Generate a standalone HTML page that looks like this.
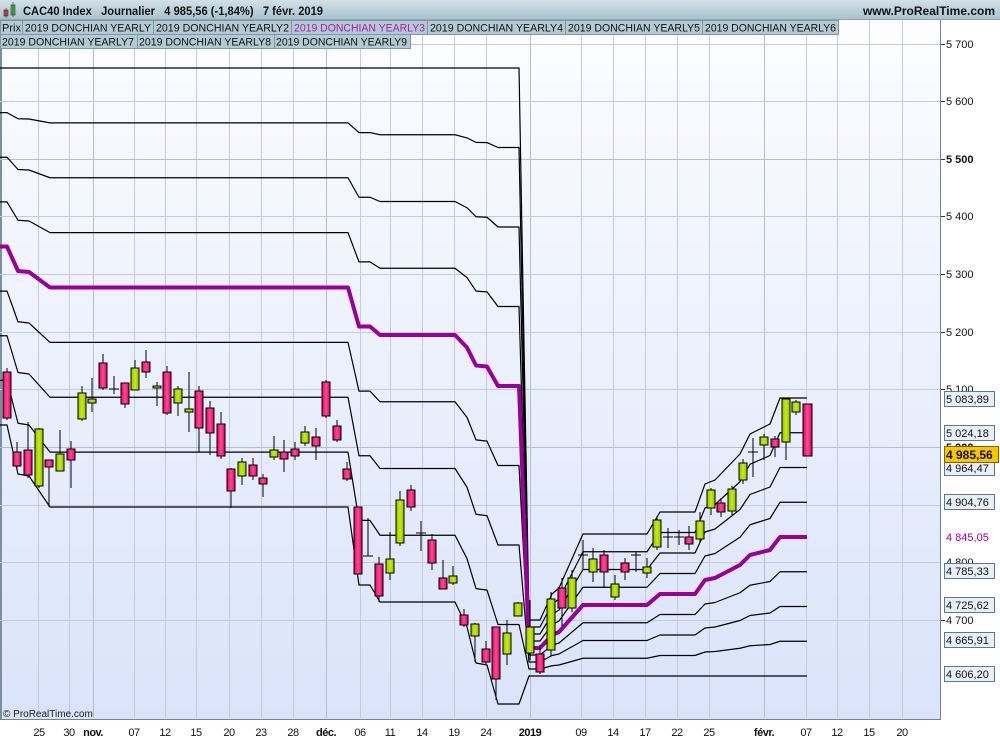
<!DOCTYPE html>
<html><head><meta charset="utf-8"><style>
body{margin:0;width:1000px;height:740px;overflow:hidden;background:#fff;font-family:"Liberation Sans",sans-serif}
svg{position:absolute;left:0;top:0}
</style></head><body>
<svg width="1000" height="740" viewBox="0 0 1000 740" xmlns="http://www.w3.org/2000/svg" font-family="Liberation Sans, sans-serif">
<defs>
<linearGradient id="bg" x1="0" y1="0" x2="0" y2="1"><stop offset="0" stop-color="#fdfdff"/><stop offset="1" stop-color="#d9e3fa"/></linearGradient>
<linearGradient id="hd" x1="0" y1="0" x2="0" y2="1"><stop offset="0" stop-color="#d2e1e8"/><stop offset="1" stop-color="#a9c1cd"/></linearGradient>
<linearGradient id="gr" x1="0" y1="0" x2="1" y2="0"><stop offset="0" stop-color="#8fc000"/><stop offset=".5" stop-color="#c6ec10"/><stop offset="1" stop-color="#8fc000"/></linearGradient>
<linearGradient id="pk" x1="0" y1="0" x2="1" y2="0"><stop offset="0" stop-color="#e0005c"/><stop offset=".5" stop-color="#ff4c9a"/><stop offset="1" stop-color="#e0005c"/></linearGradient>
</defs>
<rect x="0" y="20" width="940" height="699" fill="url(#bg)"/>
<rect x="0" y="20" width="2" height="699" fill="#7890a0"/>
<g stroke="#c4cbdc" stroke-width="1">
<line x1="38.5" y1="20" x2="38.5" y2="718"/><line x1="69.5" y1="20" x2="69.5" y2="718"/><line x1="93.5" y1="20" x2="93.5" y2="718" stroke="#b6bdd0"/><line x1="134.5" y1="20" x2="134.5" y2="718"/><line x1="165.5" y1="20" x2="165.5" y2="718"/><line x1="196.5" y1="20" x2="196.5" y2="718"/><line x1="229.5" y1="20" x2="229.5" y2="718"/><line x1="261.5" y1="20" x2="261.5" y2="718"/><line x1="293.5" y1="20" x2="293.5" y2="718"/><line x1="326.5" y1="20" x2="326.5" y2="718" stroke="#b6bdd0"/><line x1="360.5" y1="20" x2="360.5" y2="718"/><line x1="390.5" y1="20" x2="390.5" y2="718"/><line x1="422.5" y1="20" x2="422.5" y2="718"/><line x1="454.5" y1="20" x2="454.5" y2="718"/><line x1="486.5" y1="20" x2="486.5" y2="718"/><line x1="530.5" y1="20" x2="530.5" y2="718" stroke="#b6bdd0"/><line x1="581.5" y1="20" x2="581.5" y2="718"/><line x1="613.5" y1="20" x2="613.5" y2="718"/><line x1="645.5" y1="20" x2="645.5" y2="718"/><line x1="677.5" y1="20" x2="677.5" y2="718"/><line x1="709.5" y1="20" x2="709.5" y2="718"/><line x1="764.5" y1="20" x2="764.5" y2="718" stroke="#b6bdd0"/><line x1="806.5" y1="20" x2="806.5" y2="718"/><line x1="837.5" y1="20" x2="837.5" y2="718"/><line x1="869.5" y1="20" x2="869.5" y2="718"/><line x1="902.5" y1="20" x2="902.5" y2="718"/>
<line x1="0" y1="44.5" x2="940" y2="44.5"/><line x1="0" y1="101.5" x2="940" y2="101.5"/><line x1="0" y1="159.5" x2="940" y2="159.5" stroke="#b6bdd0"/><line x1="0" y1="216.5" x2="940" y2="216.5"/><line x1="0" y1="274.5" x2="940" y2="274.5"/><line x1="0" y1="332.5" x2="940" y2="332.5"/><line x1="0" y1="389.5" x2="940" y2="389.5"/><line x1="0" y1="447.5" x2="940" y2="447.5" stroke="#b6bdd0"/><line x1="0" y1="505.5" x2="940" y2="505.5"/><line x1="0" y1="562.5" x2="940" y2="562.5"/><line x1="0" y1="620.5" x2="940" y2="620.5"/>
</g>
<g fill="none" stroke="#000" stroke-width="1.2" stroke-linejoin="round">
<polyline points="0,68 519,68 529,620 540,620 552,594 559,588 583,534 647,534 660,512 695,512 705,484 715,480 740,454 750,434 770,424 780,398 807,398"/>
<polyline points="0,112.6 7,112.6 18,118.75 29,119 50,122.9 348,122.9 359,132.6 370,132.6 380,134.75 455,134.75 467,137.9 476,142.4 487,142.6 498,147.5 519,147.5 529,627 540,627 552,604.25 559,599 583,551.75 647,551.75 660,532.5 695,532.5 705,508 715,504.5 740,481.75 750,464.25 770,455.5 780,432.75 807,432.75"/>
<polyline points="0,157.25 7,157.25 18,169.5 29,170 50,177.75 348,177.75 359,197.25 370,197.25 380,201.5 455,201.5 467,207.75 476,216.75 487,217.25 498,227 519,227 529,634 540,634 552,614.5 559,610 583,569.5 647,569.5 660,553 695,553 705,532 715,529 740,509.5 750,494.5 770,487 780,467.5 807,467.5"/>
<polyline points="0,201.9 7,201.9 18,220.25 29,221 50,232.6 348,232.6 359,261.9 370,261.9 380,268.25 455,268.25 467,277.6 476,291.1 487,291.9 498,306.5 519,306.5 529,641 540,641 552,624.75 559,621 583,587.25 647,587.25 660,573.5 695,573.5 705,556 715,553.5 740,537.25 750,524.75 770,518.5 780,502.25 807,502.25"/>
<polyline points="0,291.1 7,291.1 18,321.75 29,323 50,342.4 348,342.4 359,391.1 370,391.1 380,401.75 455,401.75 467,417.4 476,439.9 487,441.1 498,465.5 519,465.5 529,655 540,655 552,645.25 559,643 583,622.75 647,622.75 660,614.5 695,614.5 705,604 715,602.5 740,592.75 750,585.25 770,581.5 780,571.75 807,571.75"/>
<polyline points="0,335.75 7,335.75 18,372.5 29,374 50,397.25 348,397.25 359,455.75 370,455.75 380,468.5 455,468.5 467,487.25 476,514.25 487,515.75 498,545 519,545 529,662 540,662 552,655.5 559,654 583,640.5 647,640.5 660,635 695,635 705,628 715,627 740,620.5 750,615.5 770,613 780,606.5 807,606.5"/>
<polyline points="0,380.4 7,380.4 18,423.25 29,425 50,452.1 348,452.1 359,520.4 370,520.4 380,535.25 455,535.25 467,558.6 476,588.6 487,590.1 498,624.5 519,624.5 529,669 540,669 552,665.75 559,665 583,658.25 647,658.25 660,655.5 695,655.5 705,652 715,651.5 740,648.25 750,645.75 770,644.5 780,641.25 807,641.25"/>
<polyline points="0,425 7,425 18,474 29,476 50,507 348,507 359,585 370,585 380,602 455,602 467,627 476,663 487,665 498,704 519,704 529,676 807,676"/>
</g>
<polyline fill="none" stroke="#990099" stroke-width="4" stroke-linejoin="round" points="0,246.5 7,246.5 18,271 29,272 50,287.5 348,287.5 359,326.5 370,326.5 380,335 455,335 467,347.5 476,365.5 487,366.5 498,386 519,386 529,648 540,648 552,635 559,632 583,605 647,605 660,594 695,594 705,580 715,578 740,565 750,555 770,550 780,537 807,537"/>
<g stroke="#000" stroke-width="1">
<line x1="7" y1="368" x2="7" y2="420"/><rect x="3" y="372" width="8" height="46" fill="url(#pk)"/>
<line x1="17" y1="442" x2="17" y2="468"/><rect x="13" y="452" width="8" height="14" fill="url(#pk)"/>
<line x1="28" y1="422" x2="28" y2="478"/><rect x="24" y="450" width="8" height="25" fill="url(#pk)"/>
<line x1="39" y1="428" x2="39" y2="488"/><rect x="35" y="429" width="8" height="57" fill="url(#gr)"/>
<line x1="49" y1="460" x2="49" y2="507"/><rect x="45" y="460" width="8" height="7" fill="url(#pk)"/>
<line x1="60" y1="430" x2="60" y2="471"/><rect x="56" y="454" width="8" height="17" fill="url(#gr)"/>
<line x1="71" y1="441" x2="71" y2="488"/><rect x="67" y="449" width="8" height="11" fill="url(#pk)"/>
<line x1="82" y1="386" x2="82" y2="421"/><rect x="78" y="393" width="8" height="26" fill="url(#gr)"/>
<line x1="92" y1="378" x2="92" y2="412"/><rect x="88" y="399" width="8" height="4" fill="url(#gr)"/>
<line x1="103" y1="354" x2="103" y2="390"/><rect x="99" y="363" width="8" height="25" fill="url(#pk)"/>
<line x1="114" y1="376" x2="114" y2="394"/><line x1="109" y1="389" x2="119" y2="389"/>
<line x1="125" y1="383" x2="125" y2="408"/><rect x="121" y="383" width="8" height="21" fill="url(#pk)"/>
<line x1="135" y1="360" x2="135" y2="390"/><rect x="131" y="368" width="8" height="22" fill="url(#gr)"/>
<line x1="146" y1="350" x2="146" y2="378"/><rect x="142" y="362" width="8" height="10" fill="url(#pk)"/>
<line x1="157" y1="382" x2="157" y2="406"/><rect x="153" y="386" width="8" height="2" fill="url(#gr)"/>
<line x1="167" y1="366" x2="167" y2="415"/><rect x="163" y="372" width="8" height="41" fill="url(#pk)"/>
<line x1="178" y1="386" x2="178" y2="416"/><rect x="174" y="389" width="8" height="14" fill="url(#gr)"/>
<line x1="189" y1="372" x2="189" y2="432"/><rect x="185" y="409" width="8" height="3" fill="url(#gr)"/>
<line x1="199" y1="386" x2="199" y2="452"/><rect x="195" y="391" width="8" height="37" fill="url(#pk)"/>
<line x1="210" y1="401" x2="210" y2="455"/><rect x="206" y="408" width="8" height="25" fill="url(#pk)"/>
<line x1="221" y1="412" x2="221" y2="459"/><rect x="217" y="424" width="8" height="32" fill="url(#pk)"/>
<line x1="231" y1="468" x2="231" y2="508"/><rect x="227" y="469" width="8" height="22" fill="url(#pk)"/>
<line x1="242" y1="458" x2="242" y2="485"/><rect x="238" y="462" width="8" height="14" fill="url(#gr)"/>
<line x1="253" y1="458" x2="253" y2="480"/><rect x="249" y="465" width="8" height="11" fill="url(#pk)"/>
<line x1="263" y1="474" x2="263" y2="497"/><rect x="259" y="478" width="8" height="6" fill="url(#pk)"/>
<line x1="274" y1="436" x2="274" y2="460"/><rect x="270" y="450" width="8" height="7" fill="url(#gr)"/>
<line x1="284" y1="440" x2="284" y2="472"/><rect x="280" y="452" width="8" height="7" fill="url(#pk)"/>
<line x1="295" y1="442" x2="295" y2="460"/><rect x="291" y="449" width="8" height="7" fill="url(#pk)"/>
<line x1="305" y1="426" x2="305" y2="446"/><rect x="301" y="432" width="8" height="11" fill="url(#gr)"/>
<line x1="316" y1="428" x2="316" y2="460"/><rect x="312" y="437" width="8" height="9" fill="url(#pk)"/>
<line x1="326" y1="380" x2="326" y2="418"/><rect x="322" y="382" width="8" height="34" fill="url(#pk)"/>
<line x1="337" y1="420" x2="337" y2="442"/><rect x="333" y="426" width="8" height="14" fill="url(#pk)"/>
<line x1="347" y1="462" x2="347" y2="481"/><rect x="343" y="469" width="8" height="10" fill="url(#pk)"/>
<rect x="354" y="507" width="8" height="67" fill="url(#pk)"/>
<line x1="368" y1="518" x2="368" y2="556"/><line x1="363" y1="556" x2="373" y2="556"/>
<line x1="379" y1="557" x2="379" y2="602"/><rect x="375" y="564" width="8" height="32" fill="url(#pk)"/>
<line x1="390" y1="532" x2="390" y2="580"/><rect x="386" y="559" width="8" height="14" fill="url(#gr)"/>
<line x1="400" y1="491" x2="400" y2="546"/><rect x="396" y="500" width="8" height="43" fill="url(#gr)"/>
<line x1="411" y1="485" x2="411" y2="511"/><rect x="407" y="490" width="8" height="17" fill="url(#pk)"/>
<line x1="421" y1="521" x2="421" y2="551"/><line x1="416" y1="533" x2="426" y2="533"/>
<line x1="432" y1="534" x2="432" y2="570"/><rect x="428" y="540" width="8" height="23" fill="url(#pk)"/>
<line x1="443" y1="560" x2="443" y2="589"/><rect x="439" y="578" width="8" height="11" fill="url(#pk)"/>
<line x1="453" y1="566" x2="453" y2="585"/><rect x="449" y="576" width="8" height="7" fill="url(#gr)"/>
<line x1="464" y1="609" x2="464" y2="627"/><rect x="460" y="615" width="8" height="10" fill="url(#pk)"/>
<line x1="475" y1="623" x2="475" y2="662"/><rect x="471" y="624" width="8" height="12" fill="url(#gr)"/>
<line x1="486" y1="641" x2="486" y2="664"/><rect x="482" y="649" width="8" height="13" fill="url(#pk)"/>
<line x1="496" y1="627" x2="496" y2="700"/><rect x="492" y="627" width="8" height="52" fill="url(#pk)"/>
<line x1="507" y1="620" x2="507" y2="665"/><rect x="503" y="633" width="8" height="21" fill="url(#gr)"/>
<line x1="518" y1="602" x2="518" y2="616"/><rect x="514" y="603" width="8" height="13" fill="url(#gr)"/>
<line x1="530" y1="600" x2="530" y2="660"/><rect x="526" y="627" width="8" height="26" fill="url(#gr)"/>
<line x1="540" y1="645" x2="540" y2="674"/><rect x="536" y="654" width="8" height="18" fill="url(#pk)"/>
<line x1="551" y1="592" x2="551" y2="656"/><rect x="547" y="599" width="8" height="51" fill="url(#gr)"/>
<line x1="562" y1="578" x2="562" y2="626"/><rect x="558" y="588" width="8" height="20" fill="url(#pk)"/>
<line x1="572" y1="570" x2="572" y2="612"/><rect x="568" y="578" width="8" height="30" fill="url(#gr)"/>
<line x1="583" y1="540" x2="583" y2="570"/><line x1="578" y1="555" x2="588" y2="555"/>
<line x1="593" y1="548" x2="593" y2="582"/><rect x="589" y="559" width="8" height="13" fill="url(#gr)"/>
<line x1="604" y1="550" x2="604" y2="588"/><rect x="600" y="555" width="8" height="17" fill="url(#pk)"/>
<line x1="615" y1="575" x2="615" y2="600"/><rect x="611" y="584" width="8" height="13" fill="url(#gr)"/>
<line x1="625" y1="558" x2="625" y2="580"/><rect x="621" y="563" width="8" height="9" fill="url(#pk)"/>
<line x1="636" y1="552" x2="636" y2="572"/><line x1="631" y1="555" x2="641" y2="555"/>
<line x1="647" y1="558" x2="647" y2="578"/><rect x="643" y="567" width="8" height="6" fill="url(#gr)"/>
<line x1="657" y1="516" x2="657" y2="550"/><rect x="653" y="520" width="8" height="27" fill="url(#gr)"/>
<line x1="668" y1="528" x2="668" y2="548"/><line x1="663" y1="537" x2="673" y2="537"/>
<line x1="679" y1="530" x2="679" y2="545"/><line x1="674" y1="537" x2="684" y2="537"/>
<line x1="689" y1="526" x2="689" y2="550"/><rect x="685" y="537" width="8" height="7" fill="url(#pk)"/>
<line x1="700" y1="512" x2="700" y2="542"/><rect x="696" y="521" width="8" height="18" fill="url(#gr)"/>
<line x1="711" y1="488" x2="711" y2="515"/><rect x="707" y="490" width="8" height="18" fill="url(#gr)"/>
<line x1="721" y1="498" x2="721" y2="517"/><rect x="717" y="503" width="8" height="9" fill="url(#pk)"/>
<line x1="732" y1="486" x2="732" y2="515"/><rect x="728" y="489" width="8" height="22" fill="url(#gr)"/>
<line x1="743" y1="459" x2="743" y2="484"/><rect x="739" y="463" width="8" height="17" fill="url(#gr)"/>
<line x1="753" y1="438" x2="753" y2="477"/><line x1="748" y1="452" x2="758" y2="452"/>
<line x1="764" y1="434" x2="764" y2="460"/><rect x="760" y="437" width="8" height="8" fill="url(#gr)"/>
<line x1="775" y1="436" x2="775" y2="457"/><rect x="771" y="439" width="8" height="8" fill="url(#pk)"/>
<line x1="786" y1="399" x2="786" y2="460"/><rect x="782" y="399" width="8" height="43" fill="url(#gr)"/>
<line x1="796" y1="400" x2="796" y2="415"/><rect x="792" y="402" width="8" height="10" fill="url(#gr)"/>
<rect x="803" y="404" width="9" height="52" fill="url(#pk)"/>
</g>
<text x="3" y="717" font-size="10" fill="#222">© ProRealTime.com</text>
<rect x="0" y="0" width="1000" height="20" fill="url(#hd)"/>
<line x1="0" y1="19.5" x2="1000" y2="19.5" stroke="#8aa4b2"/>
<rect x="4" y="10" width="4" height="6" fill="#e04040" stroke="#333" stroke-width=".6"/><line x1="6" y1="8" x2="6" y2="18" stroke="#333" stroke-width=".6"/>
<rect x="11" y="5" width="4" height="10" fill="#40c040" stroke="#333" stroke-width=".6"/><line x1="13" y1="2" x2="13" y2="17" stroke="#333" stroke-width=".6"/>
<text x="23" y="15" font-size="12" font-weight="bold" fill="#111" xml:space="preserve" textLength="300" lengthAdjust="spacingAndGlyphs">CAC40 Index   Journalier   4 985,56 (-1,84%)   7 févr. 2019</text>
<text x="995" y="15" font-size="12" font-weight="bold" fill="#111" text-anchor="end">www.ProRealTime.com</text>
<g font-size="11" fill="#111" stroke="none">
<g fill="#b3c9d3" stroke="#7d97a5">
<rect x="0.5" y="20.5" width="22" height="14"/><rect x="22.5" y="20.5" width="131" height="14"/><rect x="153.5" y="20.5" width="138" height="14"/><rect x="291.5" y="20.5" width="136" height="14"/><rect x="427.5" y="20.5" width="138" height="14"/><rect x="565.5" y="20.5" width="137" height="14"/><rect x="702.5" y="20.5" width="136" height="14"/>
<rect x="0.5" y="34.5" width="137" height="14"/><rect x="137.5" y="34.5" width="137" height="14"/><rect x="274.5" y="34.5" width="136" height="14"/>
</g>
<g lengthAdjust="spacingAndGlyphs">
<text x="2" y="31.5" textLength="19" lengthAdjust="spacingAndGlyphs">Prix</text>
<text x="25" y="31.5" textLength="126" lengthAdjust="spacingAndGlyphs">2019 DONCHIAN YEARLY</text>
<text x="156" y="31.5" textLength="133" lengthAdjust="spacingAndGlyphs">2019 DONCHIAN YEARLY2</text>
<text x="294" y="31.5" fill="#b01ab0" textLength="131" lengthAdjust="spacingAndGlyphs">2019 DONCHIAN YEARLY3</text>
<text x="430" y="31.5" textLength="133" lengthAdjust="spacingAndGlyphs">2019 DONCHIAN YEARLY4</text>
<text x="568" y="31.5" textLength="132" lengthAdjust="spacingAndGlyphs">2019 DONCHIAN YEARLY5</text>
<text x="705" y="31.5" textLength="131" lengthAdjust="spacingAndGlyphs">2019 DONCHIAN YEARLY6</text>
<text x="2" y="45.5" textLength="132" lengthAdjust="spacingAndGlyphs">2019 DONCHIAN YEARLY7</text>
<text x="139" y="45.5" textLength="132" lengthAdjust="spacingAndGlyphs">2019 DONCHIAN YEARLY8</text>
<text x="276" y="45.5" textLength="131" lengthAdjust="spacingAndGlyphs">2019 DONCHIAN YEARLY9</text>
</g>
</g>
<rect x="940" y="20" width="60" height="700" fill="#fff"/>
<line x1="940.5" y1="20" x2="940.5" y2="719" stroke="#6f8494"/>
<line x1="0" y1="719.5" x2="941" y2="719.5" stroke="#6f8494"/>
<g font-size="11" fill="#111">
<g stroke="#333"><line x1="941" y1="44.5" x2="945" y2="44.5"/><line x1="941" y1="101.5" x2="945" y2="101.5"/><line x1="941" y1="159.5" x2="945" y2="159.5"/><line x1="941" y1="216.5" x2="945" y2="216.5"/><line x1="941" y1="274.5" x2="945" y2="274.5"/><line x1="941" y1="332.5" x2="945" y2="332.5"/><line x1="941" y1="389.5" x2="945" y2="389.5"/><line x1="941" y1="620.5" x2="945" y2="620.5"/></g>
<text x="946" y="48">5 700</text><text x="946" y="105">5 600</text><text x="946" y="163" font-weight="bold">5 500</text><text x="946" y="220">5 400</text><text x="946" y="278">5 300</text><text x="946" y="336">5 200</text><text x="946" y="393">5 100</text><text x="946" y="451" font-weight="bold">5 000</text><text x="946" y="566">4 800</text><text x="946" y="624">4 700</text>
<g fill="#e9eff8" stroke="#60788a"><rect x="944.5" y="391.5" width="50" height="15"/><rect x="944.5" y="425.5" width="50" height="15"/><rect x="944.5" y="460.5" width="50" height="15"/><rect x="944.5" y="494.5" width="50" height="15"/><rect x="944.5" y="563.5" width="50" height="15"/><rect x="944.5" y="597.5" width="50" height="15"/><rect x="944.5" y="632.5" width="50" height="15"/><rect x="944.5" y="666.5" width="50" height="15"/></g>
<rect x="944.5" y="446.5" width="54" height="16" fill="#f7c600" stroke="#806000"/>
<text x="946" y="403">5 083,89</text><text x="946" y="437">5 024,18</text><text x="946" y="472">4 964,47</text><text x="946" y="506">4 904,76</text><text x="946" y="541" fill="#a000a0">4 845,05</text><text x="946" y="575">4 785,33</text><text x="946" y="609">4 725,62</text><text x="946" y="644">4 665,91</text><text x="946" y="678">4 606,20</text>
<text x="946" y="459" font-size="12" font-weight="bold">4 985,56</text>
</g>
<g font-size="11" fill="#111" text-anchor="middle" letter-spacing="-0.5">
<text x="39" y="736">25</text><text x="69" y="736">30</text><text x="93" y="736" font-weight="bold">nov.</text><text x="134" y="736">07</text><text x="165" y="736">12</text><text x="196" y="736">15</text><text x="229" y="736">20</text><text x="261" y="736">23</text><text x="293" y="736">28</text><text x="326" y="736" font-weight="bold">déc.</text><text x="360" y="736">06</text><text x="390" y="736">11</text><text x="422" y="736">14</text><text x="454" y="736">19</text><text x="486" y="736">24</text><text x="530" y="736" font-weight="bold">2019</text><text x="581" y="736">09</text><text x="613" y="736">14</text><text x="645" y="736">17</text><text x="677" y="736">22</text><text x="709" y="736">25</text><text x="764" y="736" font-weight="bold">févr.</text><text x="806" y="736">07</text><text x="837" y="736">12</text><text x="869" y="736">15</text><text x="902" y="736">20</text>
</g>
</svg>
</body></html>
